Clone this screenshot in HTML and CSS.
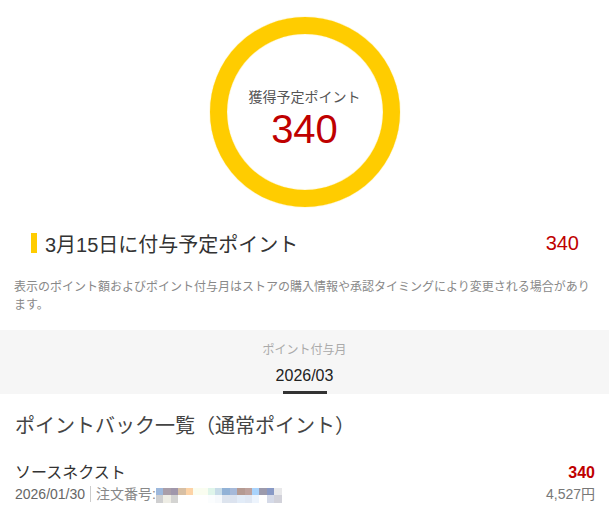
FILE: index.html
```html
<!DOCTYPE html>
<html lang="ja">
<head>
<meta charset="utf-8">
<link rel="stylesheet" href="styles.css">
</head>
<body>
<div class="hero">
  <div class="ring">
    <div class="ring-label">獲得予定ポイント</div>
    <div class="ring-value">340</div>
  </div>
</div>
<div class="schedule">
  <div class="schedule-title"><span class="bar"></span>3月15日に付与予定ポイント</div>
  <div class="schedule-points">340</div>
</div>
<p class="note">表示のポイント額およびポイント付与月はストアの購入情報や承認タイミングにより変更される場合があります。</p>
<div class="month-band">
  <div class="month-label">ポイント付与月</div>
  <div class="month-tab">2026/03</div>
</div>
<h2 class="list-title">ポイントバック一覧（通常ポイント）</h2>
<div class="item">
  <div class="item-main">
    <div class="item-name">ソースネクスト</div>
    <div class="item-meta"><span class="date">2026/01/30</span><span class="order">注文番号:</span><span class="mosaic">
      <i style="background:#9db8dc"></i><i style="background:#a99ea9"></i><i style="background:#a097ab"></i><i style="background:#d7bfa4"></i><i style="background:#fdd3a6"></i><i style="background:#fafdf0"></i><i style="background:#fafdf0"></i><i style="background:#dff5ea"></i><i style="background:#c8dce8"></i><i style="background:#92b2d6"></i><i style="background:#a6b9d9"></i><i style="background:#b59a92"></i><i style="background:#bea29d"></i><i style="background:#a9d3fc"></i><i style="background:#9c9aac"></i><i style="background:#8899c5"></i><i style="background:#e8e8ea"></i>
      <i style="background:#cfcfd0"></i><i style="background:#eeede5"></i><i style="background:#d4d4d2"></i><i style="background:#ffffff"></i><i style="background:#ffffff"></i><i style="background:#ffffff"></i><i style="background:#ffffff"></i><i style="background:#fbfdfe"></i><i style="background:#f6f9fc"></i><i style="background:#dde4ee"></i><i style="background:#dce3ef"></i><i style="background:#e2ecf8"></i><i style="background:#e0e8f4"></i><i style="background:#edf4fd"></i><i style="background:#ffffff"></i><i style="background:#d5dae8"></i><i style="background:#d2d2da"></i>
    </span></div>
  </div>
  <div class="item-side">
    <div class="item-points">340</div>
    <div class="item-price">4,527円</div>
  </div>
</div>
</body>
</html>
```
FILE: styles.css
```css
html, body {
  margin: 0;
  padding: 0;
  background: #fff;
}
body {
  font-family: "Liberation Sans", Arial, "Noto Sans CJK JP", sans-serif;
  color: #333;
}
.hero {
  display: flex;
  justify-content: center;
  padding-top: 17px;
}
.ring {
  width: 190px;
  height: 190px;
  box-sizing: border-box;
  border: 17px solid #ffcc00;
  border-radius: 50%;
  display: flex;
  flex-direction: column;
  align-items: center;
  justify-content: center;
  box-shadow: 0 0 1px #ffcc00, inset 0 0 1px #ffcc00;
}
.ring-label {
  font-size: 14px;
  color: #555;
  line-height: 18px;
  margin-top: 15px;
}
.ring-value {
  font-size: 40px;
  color: #bf0000;
  line-height: 46px;
  margin-top: 0;
}
.schedule {
  display: flex;
  justify-content: space-between;
  align-items: center;
  padding: 0 30px 0 31px;
  margin-top: 24px;
  height: 24px;
}
.schedule-title {
  display: flex;
  align-items: center;
  font-size: 20px;
  color: #333;
}
.bar {
  width: 6px;
  height: 20px;
  background: #ffcc00;
  margin-right: 8px;
}
.schedule-points {
  font-size: 20px;
  color: #bf0000;
}
.note {
  margin: 23px 0 0;
  padding: 0 14px;
  font-size: 12px;
  line-height: 18px;
  color: #888;
}
.month-band {
  margin-top: 16px;
  background: #f6f6f6;
  height: 64px;
  display: flex;
  flex-direction: column;
  align-items: center;
  box-sizing: border-box;
  padding-top: 13px;
}
.month-label {
  font-size: 12px;
  color: #aaa;
  line-height: 14px;
}
.month-tab {
  font-size: 16px;
  color: #222;
  line-height: 18px;
  margin-top: 10px;
  padding: 0 0 6px;
  border-bottom: 3px solid #333;
  width: 44px;
  display: flex;
  justify-content: center;
  white-space: nowrap;
}
.list-title {
  margin: 20px 0 0;
  padding: 0 15px;
  font-size: 20px;
  font-weight: normal;
  color: #444;
  line-height: 24px;
}
.item {
  display: flex;
  justify-content: space-between;
  padding: 0 14px 0 15px;
  margin-top: 25px;
}
.item-name {
  font-size: 16px;
  line-height: 20px;
  color: #333;
}
.item-meta {
  display: flex;
  align-items: center;
  font-size: 14px;
  color: #666;
  line-height: 18px;
  margin-top: 2px;
}
.date {
  padding-right: 5px;
  border-right: 1px solid #ccc;
  line-height: 16px;
}
.order {
  padding-left: 5px;
  color: #888;
}
.mosaic {
  display: grid;
  grid-template-columns: repeat(17, 7.4px);
  grid-template-rows: 7.5px 7.5px;
  margin-top: 2px;
}
.mosaic i {
  display: block;
}
.item-side {
  display: flex;
  flex-direction: column;
  align-items: flex-end;
}
.item-points {
  font-size: 16px;
  font-weight: bold;
  color: #bf0000;
  line-height: 20px;
}
.item-price {
  font-size: 14px;
  color: #777;
  line-height: 18px;
  margin-top: 2px;
}
```
